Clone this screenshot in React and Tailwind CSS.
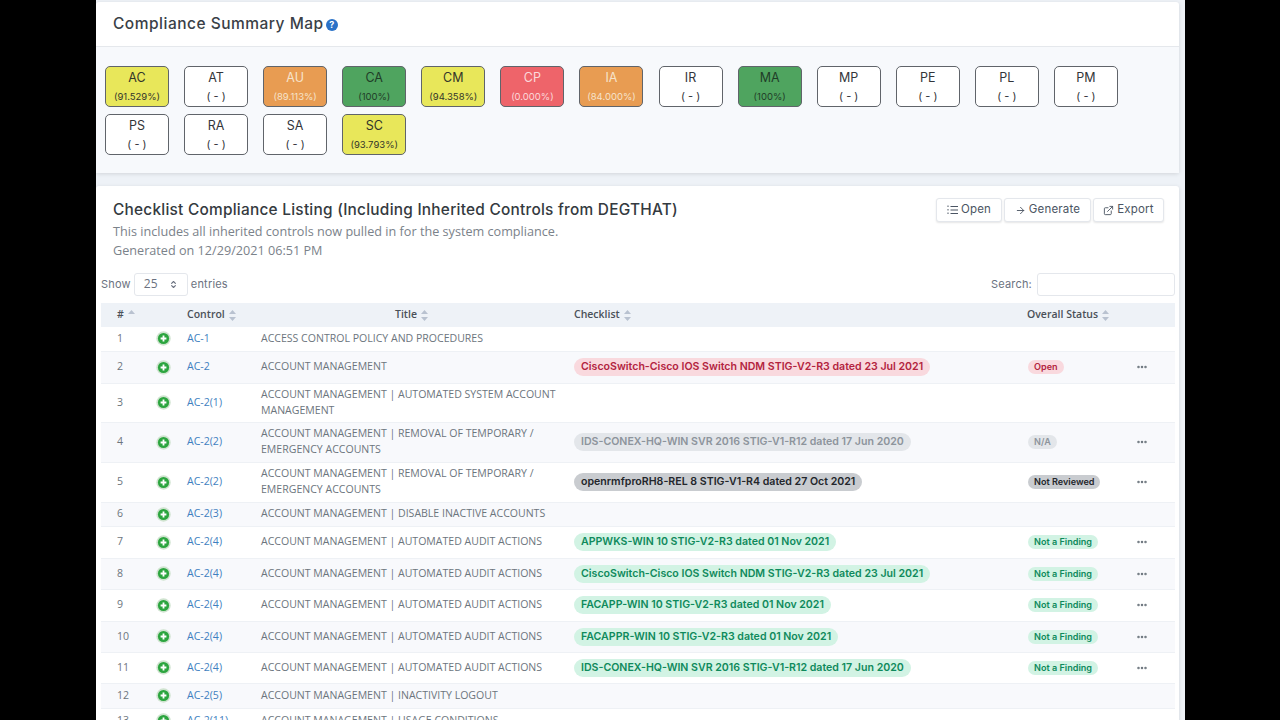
import { ChevronsUpDown, MoreHorizontal, ArrowRight, ExternalLink } from 'lucide-react';

const FAMILIES = [
  ['AC', '(91.529%)', 'yellow'],
  ['AT', '( - )', 'none'],
  ['AU', '(89.113%)', 'orange'],
  ['CA', '(100%)', 'green'],
  ['CM', '(94.358%)', 'yellow'],
  ['CP', '(0.000%)', 'red'],
  ['IA', '(84.000%)', 'orange'],
  ['IR', '( - )', 'none'],
  ['MA', '(100%)', 'green'],
  ['MP', '( - )', 'none'],
  ['PE', '( - )', 'none'],
  ['PL', '( - )', 'none'],
  ['PM', '( - )', 'none'],
  ['PS', '( - )', 'none'],
  ['RA', '( - )', 'none'],
  ['SA', '( - )', 'none'],
  ['SC', '(93.793%)', 'yellow'],
];

const BOX_STYLES = {
  yellow: 'bg-[#e8e75a] text-[#33352a]',
  none: 'bg-white text-[#33353a]',
  orange: 'bg-[#e89c52] text-[#f6e3cb]',
  green: 'bg-[#4fa45f] text-[#1f3d28]',
  red: 'bg-[#ee646a] text-[#fbd9da]',
};

const PILLS = {
  open: 'bg-[#f9d9de] text-[#b3243f]',
  na: 'bg-[#e3e6ea] text-[#8d949c]',
  review: 'bg-[#c9ccd0] text-[#23262b]',
  pass: 'bg-[#d2f3e4] text-[#0f8a5c]',
};

const AAA = 'ACCOUNT MANAGEMENT | AUTOMATED AUDIT ACTIONS';
const REMOVAL = 'ACCOUNT MANAGEMENT | REMOVAL OF TEMPORARY / EMERGENCY ACCOUNTS';
const CISCO = 'CiscoSwitch-Cisco IOS Switch NDM STIG-V2-R3 dated 23 Jul 2021';
const IDS = 'IDS-CONEX-HQ-WIN SVR 2016 STIG-V1-R12 dated 17 Jun 2020';

const ROWS = [
  { n: 1, c: 'AC-1', t: 'ACCESS CONTROL POLICY AND PROCEDURES', h: 'h-[24px]' },
  { n: 2, c: 'AC-2', t: 'ACCOUNT MANAGEMENT', h: 'h-[32px]', l: CISCO, s: 'Open', k: 'open' },
  { n: 3, c: 'AC-2(1)', t: 'ACCOUNT MANAGEMENT | AUTOMATED SYSTEM ACCOUNT MANAGEMENT', h: 'h-[39px]' },
  { n: 4, c: 'AC-2(2)', t: REMOVAL, h: 'h-[40px]', l: IDS, s: 'N/A', k: 'na' },
  { n: 5, c: 'AC-2(2)', t: REMOVAL, h: 'h-[40px]', l: 'openrmfproRH8-REL 8 STIG-V1-R4 dated 27 Oct 2021', s: 'Not Reviewed', k: 'review' },
  { n: 6, c: 'AC-2(3)', t: 'ACCOUNT MANAGEMENT | DISABLE INACTIVE ACCOUNTS', h: 'h-[24px]' },
  { n: 7, c: 'AC-2(4)', t: AAA, h: 'h-[32px]', l: 'APPWKS-WIN 10 STIG-V2-R3 dated 01 Nov 2021', s: 'Not a Finding', k: 'pass' },
  { n: 8, c: 'AC-2(4)', t: AAA, h: 'h-[31px]', l: CISCO, s: 'Not a Finding', k: 'pass' },
  { n: 9, c: 'AC-2(4)', t: AAA, h: 'h-[32px]', l: 'FACAPP-WIN 10 STIG-V2-R3 dated 01 Nov 2021', s: 'Not a Finding', k: 'pass' },
  { n: 10, c: 'AC-2(4)', t: AAA, h: 'h-[31px]', l: 'FACAPPR-WIN 10 STIG-V2-R3 dated 01 Nov 2021', s: 'Not a Finding', k: 'pass' },
  { n: 11, c: 'AC-2(4)', t: AAA, h: 'h-[31px]', l: IDS, s: 'Not a Finding', k: 'pass' },
  { n: 12, c: 'AC-2(5)', t: 'ACCOUNT MANAGEMENT | INACTIVITY LOGOUT', h: 'h-[25px]' },
  { n: 13, c: 'AC-2(11)', t: 'ACCOUNT MANAGEMENT | USAGE CONDITIONS', h: 'h-[25px]' },
];

function SortIcon({ up }) {
  return (
    <span className="ml-1 inline-flex flex-col text-[#b9c2d0]">
      <svg width="7" height="5" viewBox="0 0 7 5"><path d="M3.5 0 7 4H0z" fill="currentColor" /></svg>
      <svg width="7" height="5" viewBox="0 0 7 5" className={up ? 'opacity-0' : 'mt-px'}><path d="M3.5 5 7 1H0z" fill="currentColor" /></svg>
    </span>
  );
}

function AddIcon() {
  return (
    <svg width="15" height="15" viewBox="0 0 15 15">
      <circle cx="7.5" cy="7.5" r="7.2" fill="#cfe3cf" />
      <circle cx="7.5" cy="7.5" r="5.6" fill="#2ca53f" />
      <path d="M7.5 4.6v5.8M4.6 7.5h5.8" stroke="#fff" strokeWidth="1.8" />
    </svg>
  );
}

function ListIcon() {
  return (
    <svg width="11" height="10" viewBox="0 0 11 10" fill="none" stroke="currentColor" strokeWidth="1">
      <path d="M3.5 1.5H11M3.5 5H11M3.5 8.5H11" />
      <path d="M1 0.5v1.5M1 4v1.5M1 7.5v1.5" />
    </svg>
  );
}

function ToolButton({ children, className }) {
  return (
    <button className={`flex h-[24px] items-center justify-center gap-[3px] rounded-[3px] border border-[#e4e7ec] bg-white text-[11.5px] tracking-[0.2px] text-[#4b5563] shadow-[0_1px_2px_rgba(0,0,0,0.1)] ${className}`}>
      {children}
    </button>
  );
}

export default function App() {
  return (
    <div className="flex h-[720px] overflow-hidden bg-black font-['Inter',sans-serif]">
      <main className="ml-[96px] mr-[95px] flex w-[1089px] flex-col gap-[13px] bg-[#eef2f7] pr-[6px] pt-[2px]">
        <section className="rounded-[3px] bg-white shadow-[0_1px_4px_rgba(0,0,0,0.12)]">
          <header className="flex h-[45px] items-center gap-[2px] border-b border-[#e5e8ec] pl-[17px]">
            <h2 className="text-[15.5px] font-medium tracking-[0.5px] text-[#3a3f47]">Compliance Summary Map</h2>
            <span className="mt-[2px] flex h-[12px] w-[12px] items-center justify-center rounded-full bg-[#2a72c8] text-[9px] font-bold text-white">?</span>
          </header>
          <div className="flex h-[126px] flex-wrap content-start gap-x-[15.08px] gap-y-[7px] bg-[#f7f9fc] pl-[9px] pt-[19px]">
            {FAMILIES.map(([code, pct, tone]) => (
              <div
                key={code}
                className={`flex h-[41px] w-[64px] flex-col items-center rounded-[5px] border border-[#60646a] pt-[1px] ${BOX_STYLES[tone]}`}
              >
                <span className="text-[12.5px] leading-[19px]">{code}</span>
                <span className={`leading-[19px] ${tone === 'none' ? 'text-[11px]' : 'text-[9.5px]'}`}>{pct}</span>
              </div>
            ))}
          </div>
        </section>

        <section className="flex-1 rounded-[3px] bg-white pl-[5px] pr-[4px] shadow-[0_1px_4px_rgba(0,0,0,0.12)]">
          <div className="flex justify-between pl-[12px] pr-[11px] pt-[12px]">
            <div>
              <h2 className="text-[15.4px] font-medium leading-[24px] tracking-[0.25px] text-[#343a40]">
                Checklist Compliance Listing (Including Inherited Controls from DEGTHAT)
              </h2>
              <p className="font-['Open_Sans',sans-serif] text-[12.65px] leading-[19px] text-[#7b828a]">
                This includes all inherited controls now pulled in for the system compliance.
              </p>
              <p className="font-['Open_Sans',sans-serif] text-[12.65px] leading-[19px] text-[#7b828a]">
                Generated on 12/29/2021 06:51 PM
              </p>
            </div>
            <div className="flex gap-[2px]">
              <ToolButton className="w-[66px]"><ListIcon /> Open</ToolButton>
              <ToolButton className="w-[87px]"><ArrowRight size={11} /> Generate</ToolButton>
              <ToolButton className="w-[71px]"><ExternalLink size={11} /> Export</ToolButton>
            </div>
          </div>

          <div className="mt-[12px] flex h-[24px] items-center justify-between text-[11px] tracking-[0.2px] text-[#6b7280]">
            <div className="flex items-center">
              <span>Show</span>
              <div className="mx-[3px] flex h-[23px] w-[54px] items-center justify-between rounded-[3px] border border-[#e4e7ec] px-[9px] font-['Open_Sans',sans-serif] text-[12px]">
                25
                <ChevronsUpDown size={9} strokeWidth={3} />
              </div>
              <span>entries</span>
            </div>
            <div className="flex items-center gap-[5px]">
              <span>Search:</span>
              <div className="h-[23px] w-[138px] rounded-[3px] border border-[#e4e7ec] bg-white" />
            </div>
          </div>

          <table className="mt-[7px] w-[1074px] table-fixed border-collapse font-['Open_Sans',sans-serif] text-[10.55px] text-[#6c757d]">
            <colgroup>
              <col className="w-[48px]" />
              <col className="w-[32px]" />
              <col className="w-[74px]" />
              <col className="w-[313px]" />
              <col className="w-[453px]" />
              <col className="w-[109px]" />
              <col className="w-[45px]" />
            </colgroup>
            <thead>
              <tr className="h-[24px] bg-[#eef2f7] text-left text-[10.5px] font-semibold text-[#4a5058]">
                <th className="pl-[16px] font-semibold"><span className="inline-flex items-center">#<SortIcon up /></span></th>
                <th />
                <th className="pl-[6px] font-semibold"><span className="inline-flex items-center">Control<SortIcon /></span></th>
                <th className="text-center font-semibold"><span className="inline-flex items-center">Title<SortIcon /></span></th>
                <th className="pl-[6px] font-semibold"><span className="inline-flex items-center">Checklist<SortIcon /></span></th>
                <th className="pl-[6px] font-semibold"><span className="inline-flex items-center">Overall Status<SortIcon /></span></th>
                <th />
              </tr>
            </thead>
            <tbody>
              {ROWS.map((row) => (
                <tr key={row.n} className={`${row.h} border-b border-[#eef1f5] ${row.n % 2 === 0 ? 'bg-[#f8f9fc]' : 'bg-white'}`}>
                  <td className="pl-[16px]">{row.n}</td>
                  <td className="pl-[7px]"><AddIcon /></td>
                  <td className="pl-[6px] text-[#3f7fc0]">{row.c}</td>
                  <td className="pb-[2px] pl-[6px] pr-[6px] leading-[16px]">{row.t}</td>
                  <td className="pl-[6px]">
                    {row.l && (
                      <span className={`inline-block rounded-full px-[7px] py-[2px] font-['Inter',sans-serif] text-[10.6px] font-semibold leading-[14px] ${PILLS[row.k]}`}>
                        {row.l}
                      </span>
                    )}
                  </td>
                  <td className="pl-[7px]">
                    {row.s && (
                      <span className={`inline-block rounded-full px-[6px] py-[1px] font-['Inter',sans-serif] text-[9.1px] font-semibold leading-[12px] ${PILLS[row.k]}`}>
                        {row.s}
                      </span>
                    )}
                  </td>
                  <td className="pl-[6px] text-[#6c757d]">
                    {row.s && <MoreHorizontal size={12} strokeWidth={3} />}
                  </td>
                </tr>
              ))}
            </tbody>
          </table>
        </section>
      </main>
    </div>
  );
}
